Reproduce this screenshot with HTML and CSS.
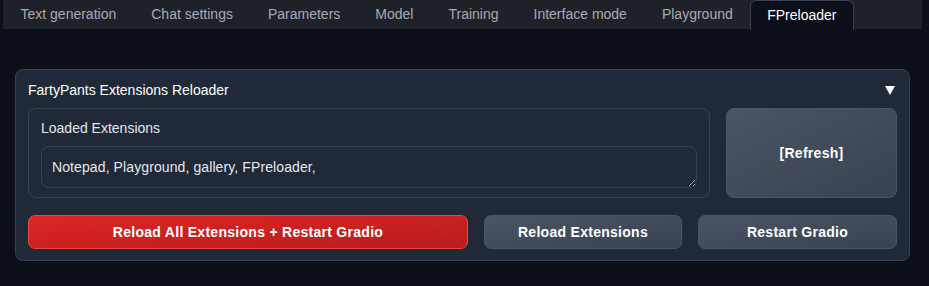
FILE: index.html
```html
<!DOCTYPE html>
<html lang="en">
<head>
<meta charset="utf-8">
<title>FPreloader</title>
<link rel="stylesheet" href="styles.css">
</head>
<body>
<nav class="tabs">
  <div class="tab">Text generation</div>
  <div class="tab">Chat settings</div>
  <div class="tab">Parameters</div>
  <div class="tab">Model</div>
  <div class="tab">Training</div>
  <div class="tab">Interface mode</div>
  <div class="tab">Playground</div>
  <div class="tab selected">FPreloader</div>
</nav>
<section class="panel">
  <div class="panel-header">
    <span>FartyPants Extensions Reloader</span>
    <span class="caret" aria-hidden="true"></span>
  </div>
  <div class="top-row">
    <div class="block">
      <div class="label">Loaded Extensions</div>
      <textarea class="field" rows="1">Notepad, Playground, gallery, FPreloader,</textarea>
    </div>
    <button class="btn secondary refresh">[Refresh]</button>
  </div>
  <div class="bottom-row">
    <button class="btn primary">Reload All Extensions + Restart Gradio</button>
    <button class="btn secondary">Reload Extensions</button>
    <button class="btn secondary">Restart Gradio</button>
  </div>
</section>
</body>
</html>
```
FILE: styles.css
```css
* { box-sizing: border-box; }
html, body { margin: 0; background: #0b0f19; }
body {
  font-family: "Liberation Sans", Arial, sans-serif;
  font-size: 14px;
  color: #e5e7eb;
  height: 286px;
  overflow: hidden;
}
.tabs {
  display: flex;
  height: 29px;
  margin: 0 7px 0 3px;
  background: #1f2128;
}
.tab {
  padding: 0 17.5px;
  line-height: 29px;
  color: #a7abb2;
  white-space: nowrap;
}
.tab.selected {
  background: #0b0f19;
  color: #ffffff;
  border: 1px solid #374151;
  border-bottom: none;
  border-radius: 6px 6px 0 0;
  padding: 0 16px;
  height: 30px;
}
.panel {
  margin: 40px 0 0 15px;
  width: 895px;
  background: #1f2937;
  border: 1px solid #374151;
  border-radius: 8px;
  padding: 10px 12px 11px;
}
.panel-header {
  display: flex;
  justify-content: space-between;
  align-items: center;
  height: 20px;
  line-height: 20px;
  margin-bottom: 8px;
  color: #ffffff;
}
.caret {
  width: 0;
  height: 0;
  border-left: 5px solid transparent;
  border-right: 5px solid transparent;
  border-top: 9px solid #ffffff;
  margin: 1px 2px 0 0;
}
.top-row {
  display: grid;
  grid-template-columns: minmax(0, 682fr) minmax(0, 171fr);
  gap: 16px;
  height: 90px;
}
.block {
  border: 1px solid #374151;
  border-radius: 8px;
  padding: 11px 12px 9px;
  display: flex;
  flex-direction: column;
}
.label {
  line-height: 16px;
  margin-bottom: 10px;
  color: #e5e7eb;
}
.field {
  display: block;
  width: 100%;
  height: 42px;
  resize: vertical;
  background: #1f2937;
  border: 1px solid #374151;
  border-radius: 8px;
  padding: 11px 10px;
  font-family: "Liberation Sans", Arial, sans-serif;
  font-size: 14px;
  letter-spacing: 0.1px;
  line-height: 18px;
  color: #e5e7eb;
  outline: none;
  overflow: hidden;
}
.btn {
  font-family: "Liberation Sans", Arial, sans-serif;
  font-size: 14px;
  font-weight: bold;
  letter-spacing: 0.28px;
  color: #ffffff;
  border-radius: 7px;
  padding: 0;
  cursor: pointer;
}
.refresh {
  border-radius: 8px;
}
.bottom-row {
  display: grid;
  grid-template-columns: minmax(0, 440fr) minmax(0, 198fr) minmax(0, 199fr);
  gap: 16px;
  margin-top: 17px;
  height: 34px;
}
.primary {
  border: 1px solid #ef4444;
  background: linear-gradient(to bottom right, #dc2626, #b91c1c);
}
.secondary {
  border: 1px solid #4b5563;
  background: linear-gradient(to bottom right, #4b5563, #374151);
}
```
